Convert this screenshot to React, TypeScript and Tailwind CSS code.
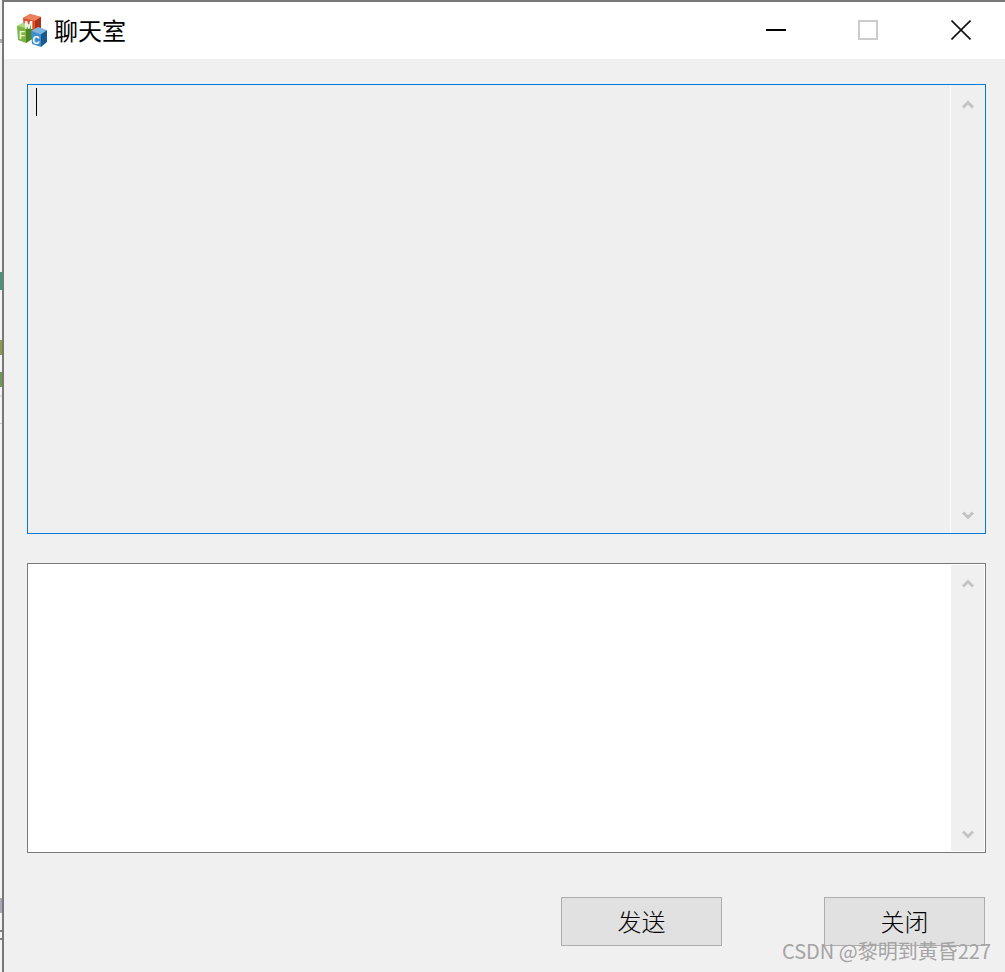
import type { ReactNode } from 'react'

const cjk = { fontFamily: '"Noto Sans CJK SC", "Liberation Sans", sans-serif' }

// MFC app icon: three coloured cubes
function AppIcon() {
  return (
    <svg width="32" height="33" viewBox="0 0 32 33" className="shrink-0">
      <path d="M7 4l7-4 11 3v11l-6 5-11-2z" fill="#d9502f" />
      <path d="M7 4l7-4 11 3-6 4z" fill="#ec7f5c" />
      <path d="M19 7l6-4v11l-6 5z" fill="#a9321b" />
      <path d="M1 12l6-3 9 2v14l-6 4-8-3z" fill="#7cb342" />
      <path d="M1 12l6-3 9 2-6 3z" fill="#b4d77c" />
      <path d="M10 14l6-3v14l-6 4z" fill="#4c8526" />
      <path d="M15 17l7-4 9 3-6 4z" fill="#7db8e2" />
      <path d="M15 17l10 3v13l-9-3z" fill="#3f8fcf" />
      <path d="M25 20l6-4v12l-6 5z" fill="#1b5a90" />
      <text x="8.5" y="15" fontSize="10" fontWeight="700" fill="#fff" fontFamily="Liberation Sans">M</text>
      <text x="3" y="25" fontSize="10" fontWeight="700" fill="#eef6dc" fontFamily="Liberation Sans">F</text>
      <text x="16.5" y="30" fontSize="10" fontWeight="700" fill="#fff" fontFamily="Liberation Sans">C</text>
    </svg>
  )
}

function Chevron({ down }: { down?: boolean }) {
  return (
    <svg width="12" height="9" viewBox="0 0 12 9" fill="none" stroke="#c4c4c4" strokeWidth="3">
      <path d={down ? 'M1 1.5l5 5 5-5' : 'M1 7.5l5-5 5 5'} />
    </svg>
  )
}

function TextBox({ focused, grey, children, className }: { focused?: boolean; grey?: boolean; children?: ReactNode; className: string }) {
  return (
    <div className={`flex border ${focused ? 'border-[#0078d7]' : 'border-[#7a7a7a]'} ${grey ? 'bg-[#efefef]' : 'bg-white'} ${className}`}>
      <div className="flex-1 px-2 pt-[3px]">{children}</div>
      {grey ? (
        <div className="flex w-[35px] flex-col items-center justify-between border-l border-l-[#fafafa] bg-[#efefef] pt-[15px] pb-[13px]">
          <Chevron />
          <Chevron down />
        </div>
      ) : (
        <div className="my-[1px] mr-[1px] flex w-[33px] flex-col items-center justify-between bg-[#f0f0f0] pt-[14px] pb-[12px]">
          <Chevron />
          <Chevron down />
        </div>
      )}
    </div>
  )
}

function PushButton({ label }: { label: string }) {
  return (
    <button className="h-[49px] w-[161px] border border-[#adadad] bg-[#e1e1e1] pb-[1px] text-[24px] font-light text-black" style={cjk}>
      {label}
    </button>
  )
}

export default function App() {
  return (
    <div className="relative flex h-[972px] w-[1005px] overflow-hidden bg-white">
      {/* sliver of the window behind */}
      <div className="flex w-[2px] shrink-0 flex-col bg-[#f4f4f4]">
        <div className="mt-[39px] h-[4px] bg-[#b0b0b0]" />
        <div className="mt-[229px] h-[18px] bg-[#3c9a78]" />
        <div className="mt-[50px] h-[15px] bg-[#8f9a50]" />
        <div className="mt-[17px] h-[15px] bg-[#6f9a50]" />
        <div className="mt-[8px] h-[2px] bg-[#dcdcdc]" />
        <div className="mt-[26px] h-[1px] bg-[#c8c8c8]" />
        <div className="mt-[474px] h-[15px] bg-[#a8a8b8]" />
        <div className="mt-[17px] h-[2px] bg-[#808080]" />
        <div className="mt-[6px] h-[2px] bg-[#808080]" />
      </div>
      <div className="flex flex-1 flex-col border-l-2 border-t-2 border-l-[#787878] border-t-[#787878] bg-[#f0f0f0]">
        {/* Title bar */}
        <div className="flex h-[57px] shrink-0 items-center bg-white pl-[12px]">
          <AppIcon />
          <span className="mb-[2px] ml-[6px] text-[24px] leading-none text-black" style={cjk}>聊天室</span>
          <div className="mb-[2px] ml-auto flex items-center pr-[34px]">
            <div className="h-[2px] w-5 bg-black" />
            <div className="ml-[72px] h-5 w-5 border-2 border-[#cccccc]" />
            <svg width="20" height="20" viewBox="0 0 20 20" stroke="#111" strokeWidth="1.6" className="ml-[73px]">
              <path d="M0.5 0.5l19 19M19.5 0.5l-19 19" />
            </svg>
          </div>
        </div>

        {/* Client area */}
        <div className="flex flex-1 flex-col pl-[23px] pr-[19px] pt-[25px]">
          <TextBox focused grey className="h-[450px]">
            <div className="h-[28px] w-[1px] bg-black" />
          </TextBox>
          <TextBox className="mt-[29px] h-[290px]" />
          <div className="mt-[44px] flex justify-end gap-[102px] pr-[1px]">
            <PushButton label="发送" />
            <PushButton label="关闭" />
          </div>
        </div>
      </div>

      {/* CSDN watermark over the corner */}
      <span className="absolute right-[14px] top-[938px] text-[20px] leading-[26px] text-[#a4a4a4]" style={cjk}>
        CSDN @黎明到黄昏227
      </span>
    </div>
  )
}
